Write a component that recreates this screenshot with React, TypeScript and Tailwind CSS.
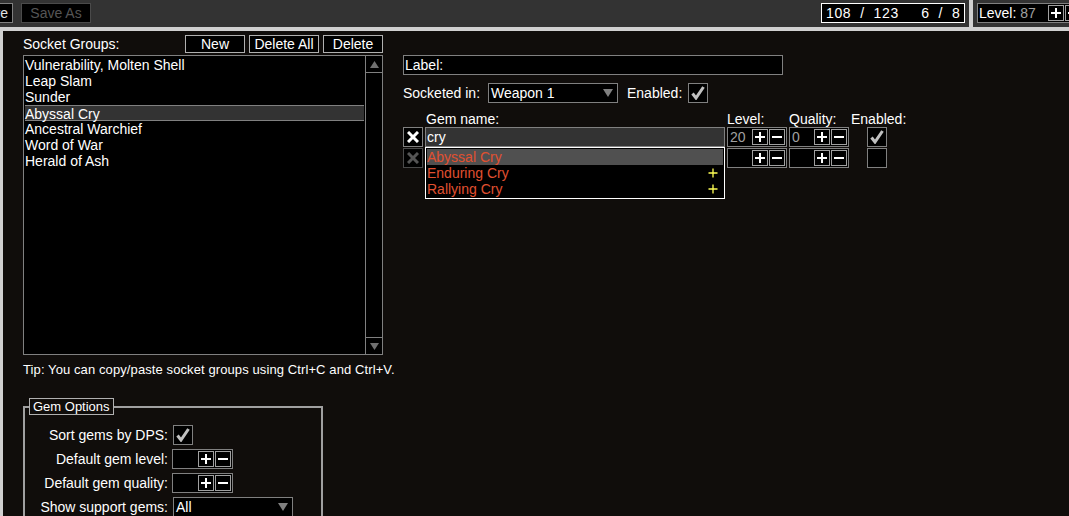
import React from 'react';

const groups = [
  'Vulnerability, Molten Shell',
  'Leap Slam',
  'Sunder',
  'Abyssal Cry',
  'Ancestral Warchief',
  'Word of War',
  'Herald of Ash',
];

const matches = [
  { name: 'Abyssal Cry', plus: false },
  { name: 'Enduring Cry', plus: true },
  { name: 'Rallying Cry', plus: true },
];

function StepBtn({ minus }: { minus?: boolean }) {
  return (
    <div className="w-[16px] h-[16px] border border-[#a0a0a0] bg-black flex items-center justify-center">
      <svg width="10" height="10" viewBox="0 0 10 10">
        <path d={minus ? 'M0 5h10' : 'M5 0v10M0 5h10'} stroke="white" strokeWidth="2" />
      </svg>
    </div>
  );
}

function NumInput({ value, w = 'w-[60px]' }: { value?: string; w?: string }) {
  return (
    <div className={`${w} h-[20px] border border-[#808080] bg-black flex items-center pl-[2px] pr-[1px] shrink-0`}>
      <span className="flex-1 text-[#a0a0a0] leading-[16px]">{value}</span>
      <div className="flex gap-[1px]">
        <StepBtn />
        <StepBtn minus />
      </div>
    </div>
  );
}

function Check({ checked }: { checked?: boolean }) {
  return (
    <div className="w-[20px] h-[20px] border border-[#808080] bg-black flex items-center justify-center shrink-0">
      {checked && (
        <svg width="14" height="14" viewBox="0 0 14 14">
          <path d="M1.5 7.5L5 12L12.5 1" fill="none" stroke="#c0c0c0" strokeWidth="3" />
        </svg>
      )}
    </div>
  );
}

function Dropdown({ value, w }: { value: string; w: string }) {
  return (
    <div className={`${w} h-[20px] border border-[#808080] bg-black flex items-center pl-[2px] pr-[4px] shrink-0`}>
      <span className="flex-1 leading-[16px]">{value}</span>
      <svg width="10" height="8" viewBox="0 0 10 8">
        <path d="M0 0h10L5 8z" fill="#808080" />
      </svg>
    </div>
  );
}

function XBtn({ disabled }: { disabled?: boolean }) {
  const c = disabled ? '#555555' : '#ffffff';
  return (
    <div className={`w-[20px] h-[20px] border bg-black flex items-center justify-center shrink-0 ${disabled ? 'border-[#4a4a4a]' : 'border-[#808080]'}`}>
      <svg width="12" height="12" viewBox="0 0 12 12">
        <path d="M1 1L11 11M11 1L1 11" stroke={c} strokeWidth="3" />
      </svg>
    </div>
  );
}

export default function App() {
  return (
    <div className="w-[1069px] h-[516px] overflow-hidden flex flex-col bg-[#100d0b] text-white text-[14px] font-['Liberation_Sans',Arial,sans-serif]">
      {/* Top bar */}
      <div className="flex h-[27px] bg-[#333333] shrink-0">
        <div className="flex flex-1 items-start pt-[3px] gap-[8px] overflow-hidden">
          <div className="-ml-[47px] w-[60px] h-[20px] border border-[#808080] bg-black text-right pr-[4px] text-[#e0e0e0] leading-[18px] shrink-0">
            Save
          </div>
          <div className="w-[70px] h-[20px] border border-[#4a4a4a] bg-black text-[#555555] text-center leading-[18px] shrink-0">
            Save As
          </div>
          <div className="ml-auto mr-[4px] w-[144px] h-[20px] border border-white bg-black pl-[4px] leading-[18px] whitespace-pre tracking-[0.6px] shrink-0">
            {'108  /  123     6  /  8'}
          </div>
        </div>
        <div className="w-[4px] bg-[#d0d0d0]" />
        <div className="w-[96px] pt-[3px] pl-[4px] shrink-0 overflow-hidden">
          <div className="w-[110px] h-[20px] border border-[#808080] bg-black flex items-center pl-[1px]">
            <span className="w-[69px] leading-[16px]">
              Level: <span className="text-[#a0a0a0]">87</span>
            </span>
            <div className="flex gap-[1px]">
              <StepBtn />
              <StepBtn minus />
            </div>
          </div>
        </div>
      </div>
      <div className="h-[4px] bg-[#d0d0d0] shrink-0" />

      {/* Body */}
      <div className="flex flex-1 min-h-0">
        <div className="w-[3px] bg-[#d0d0d0]" />
        <div className="flex flex-1 pl-[20px] pt-[4px]">
          {/* Left column */}
          <div className="w-[360px] flex flex-col shrink-0">
            <div className="flex h-[18px] items-center justify-between shrink-0">
              <span className="leading-[16px]">Socket Groups:</span>
              <div className="flex gap-[4px]">
                <div className="w-[60px] h-[18px] border border-[#b0b0b0] bg-black text-center leading-[16px]">New</div>
                <div className="w-[70px] h-[18px] border border-[#b0b0b0] bg-black text-center leading-[16px]">Delete All</div>
                <div className="w-[60px] h-[18px] border border-[#b0b0b0] bg-black text-center leading-[16px]">Delete</div>
              </div>
            </div>
            <div className="mt-[2px] h-[300px] border border-[#808080] bg-black flex shrink-0">
              <div className="flex-1 p-[1px]">
                {groups.map((g, i) => (
                  <div
                    key={g}
                    className={`h-[16px] leading-[16px] whitespace-nowrap ${i === 3 ? 'bg-[#333333] border-y border-[#808080] leading-[14px]' : ''}`}
                  >
                    {g}
                  </div>
                ))}
              </div>
              <div className="w-[17px] border-l border-[#808080] flex flex-col justify-between">
                <div className="h-[17px] border-b border-[#808080] flex items-center justify-center">
                  <svg width="9" height="7" viewBox="0 0 9 7">
                    <path d="M4.5 0L9 7H0z" fill="#707070" />
                  </svg>
                </div>
                <div className="h-[17px] border-t border-[#808080] flex items-center justify-center">
                  <svg width="9" height="7" viewBox="0 0 9 7">
                    <path d="M0 0h9L4.5 7z" fill="#707070" />
                  </svg>
                </div>
              </div>
            </div>
            <div className="mt-[7px] text-[13px] leading-[16px] tracking-[0.1px] whitespace-nowrap shrink-0">
              Tip: You can copy/paste socket groups using Ctrl+C and Ctrl+V.
            </div>
            <fieldset className="mt-[20px] w-[300px] h-[150px] border-2 border-[#a0a0a0] shrink-0">
              <legend className="ml-[4px] px-[3px] h-[17px] border border-[#b0b0b0] text-[13px] leading-[15px]">
                Gem Options
              </legend>
              <div className="flex flex-col gap-[4px] pt-[10px]">
                <div className="flex items-center h-[20px]">
                  <span className="w-[145px] text-right pr-[2px] leading-[16px]">Sort gems by DPS:</span>
                  <div className="ml-[3px]">
                    <Check checked />
                  </div>
                </div>
                <div className="flex items-center h-[20px]">
                  <span className="w-[145px] text-right pr-[2px] leading-[16px]">Default gem level:</span>
                  <div className="ml-[2px]">
                    <NumInput w="w-[61px]" />
                  </div>
                </div>
                <div className="flex items-center h-[20px]">
                  <span className="w-[145px] text-right pr-[2px] leading-[16px]">Default gem quality:</span>
                  <div className="ml-[2px]">
                    <NumInput w="w-[61px]" />
                  </div>
                </div>
                <div className="flex items-center h-[20px]">
                  <span className="w-[145px] text-right pr-[2px] leading-[16px]">Show support gems:</span>
                  <div className="ml-[3px]">
                    <Dropdown value="All" w="w-[120px]" />
                  </div>
                </div>
              </div>
            </fieldset>
          </div>

          {/* Right column */}
          <div className="ml-[20px] pt-[20px] flex flex-col">
            <div className="w-[380px] h-[20px] border border-[#808080] bg-black pl-[1px] leading-[18px] shrink-0">Label:</div>
            <div className="mt-[8px] flex items-center h-[20px] shrink-0">
              <span className="w-[85px] leading-[16px]">Socketed in:</span>
              <Dropdown value="Weapon 1" w="w-[130px]" />
              <span className="ml-[9px] w-[61px] leading-[16px]">Enabled:</span>
              <Check checked />
            </div>
            <div className="mt-[8px] h-[16px] flex leading-[16px] shrink-0">
              <span className="ml-[23px] w-[301px]">Gem name:</span>
              <span className="w-[62px]">Level:</span>
              <span className="w-[62px]">Quality:</span>
              <span>Enabled:</span>
            </div>
            <div className="flex h-[20px] gap-[2px] shrink-0">
              <XBtn />
              <div className="relative w-[300px] h-[20px] border border-[#808080] bg-[#333333] pl-[1px] leading-[18px] shrink-0">
                cry
                <div className="absolute left-[-1px] top-[19px] z-10 w-[300px] h-[52px] border border-white bg-black p-[1px]">
                  {matches.map((m, i) => (
                    <div
                      key={m.name}
                      className={`h-[16px] leading-[16px] flex items-center justify-between pr-[5px] text-[#e05030] ${i === 0 ? 'bg-[#505050]' : ''}`}
                    >
                      <span>{m.name}</span>
                      {m.plus && (
                        <svg width="10" height="10" viewBox="0 0 10 10">
                          <path d="M5 0.5v9M0.5 5h9" stroke="#ffff55" strokeWidth="1.3" />
                        </svg>
                      )}
                    </div>
                  ))}
                </div>
              </div>
              <NumInput value="20" />
              <NumInput value="0" />
              <div className="ml-[16px]">
                <Check checked />
              </div>
            </div>
            <div className="mt-[1px] flex h-[20px] gap-[2px] shrink-0">
              <XBtn disabled />
              <div className="w-[300px] h-[20px] border border-[#808080] bg-black shrink-0" />
              <NumInput />
              <NumInput />
              <div className="ml-[16px]">
                <Check />
              </div>
            </div>
          </div>
        </div>
      </div>
    </div>
  );
}
